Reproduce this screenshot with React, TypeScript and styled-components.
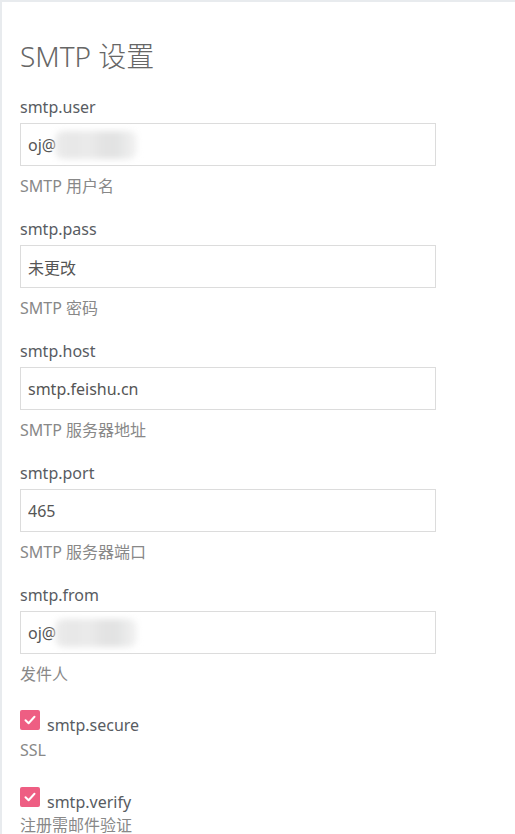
import React from "react";
import styled, { createGlobalStyle } from "styled-components";

const GlobalStyle = createGlobalStyle`
  html, body {
    margin: 0;
    padding: 0;
    background: #e8ebee;
  }
  body {
    font-family: "Noto Sans", "Noto Sans CJK SC", sans-serif;
  }
`;

const Card = styled.div`
  margin: 2px 0 0 2px;
  min-height: 832px;
  background: #fff;
  padding: 37px 0 0 18px;
  box-sizing: border-box;
`;

const Title = styled.h2`
  margin: 0 0 1px;
  font-size: 28px;
  line-height: 34px;
  font-weight: 300;
  color: #666;
`;

const Group = styled.div`
  display: flex;
  flex-direction: column;
  padding-top: 22px;
`;

const Label = styled.label`
  font-size: 16px;
  line-height: 22px;
  color: #585c62;
  margin-bottom: 5px;
`;

const FieldWrap = styled.div`
  position: relative;
  width: 416px;
`;

const Input = styled.input`
  display: block;
  width: 100%;
  height: 43px;
  box-sizing: border-box;
  border: 1px solid #dcdcdc;
  border-radius: 0;
  padding: 0 7px;
  font-family: inherit;
  font-size: 16px;
  color: #555;
  background: #fff;
  outline: none;
`;

const Redact = styled.span<{ left: number; width: number }>`
  position: absolute;
  top: 8px;
  left: ${(p) => p.left}px;
  width: ${(p) => p.width}px;
  height: 28px;
  border-radius: 8px;
  background: linear-gradient(
    to right,
    #ececec 0%,
    #e7e7e7 20%,
    #ebebeb 40%,
    #e3e3e3 60%,
    #e2e3e3 75%,
    #f3f3f3 100%
  );
  filter: blur(3px);
  pointer-events: none;
`;

const Help = styled.div<{ gap?: number }>`
  margin-top: ${(p) => p.gap ?? 10}px;
  font-size: 16px;
  line-height: 20px;
  color: #888;
`;

const CheckRow = styled.div<{ top: number }>`
  display: flex;
  align-items: flex-start;
  gap: 7px;
  margin-top: ${(p) => p.top}px;
`;

const Box = styled.span`
  width: 20px;
  height: 20px;
  border-radius: 2px;
  background: #ee5e83;
  display: flex;
  align-items: center;
  justify-content: center;
  flex-shrink: 0;
`;

const CheckLabel = styled.span`
  padding-top: 4px;
  font-size: 16px;
  line-height: 22px;
  color: #585c62;
`;

const Check = () => (
  <Box>
    <svg width="14" height="14" viewBox="0 0 14 14" fill="none">
      <path
        d="M2.5 7.2 L5.6 10.2 L11.5 3.8"
        stroke="#fff"
        strokeWidth="2"
        strokeLinecap="round"
        strokeLinejoin="round"
      />
    </svg>
  </Box>
);

type Field = {
  name: string;
  value: string;
  help: string;
  redact?: boolean;
};

const fields: Field[] = [
  { name: "smtp.user", value: "oj@", help: "SMTP 用户名", redact: true },
  { name: "smtp.pass", value: "未更改", help: "SMTP 密码" },
  { name: "smtp.host", value: "smtp.feishu.cn", help: "SMTP 服务器地址" },
  { name: "smtp.port", value: "465", help: "SMTP 服务器端口" },
  { name: "smtp.from", value: "oj@", help: "发件人", redact: true },
];

export default function App() {
  return (
    <>
      <GlobalStyle />
      <Card>
        <Title>SMTP 设置</Title>
        {fields.map((f) => (
          <Group key={f.name}>
            <Label>{f.name}</Label>
            <FieldWrap>
              <Input defaultValue={f.value} readOnly />
              {f.redact && <Redact left={35} width={82} />}
            </FieldWrap>
            <Help>{f.help}</Help>
          </Group>
        ))}
        <CheckRow top={26}>
          <Check />
          <CheckLabel>smtp.secure</CheckLabel>
        </CheckRow>
        <Help gap={4}>SSL</Help>
        <CheckRow top={27}>
          <Check />
          <CheckLabel>smtp.verify</CheckLabel>
        </CheckRow>
        <Help gap={2}>注册需邮件验证</Help>
      </Card>
    </>
  );
}
